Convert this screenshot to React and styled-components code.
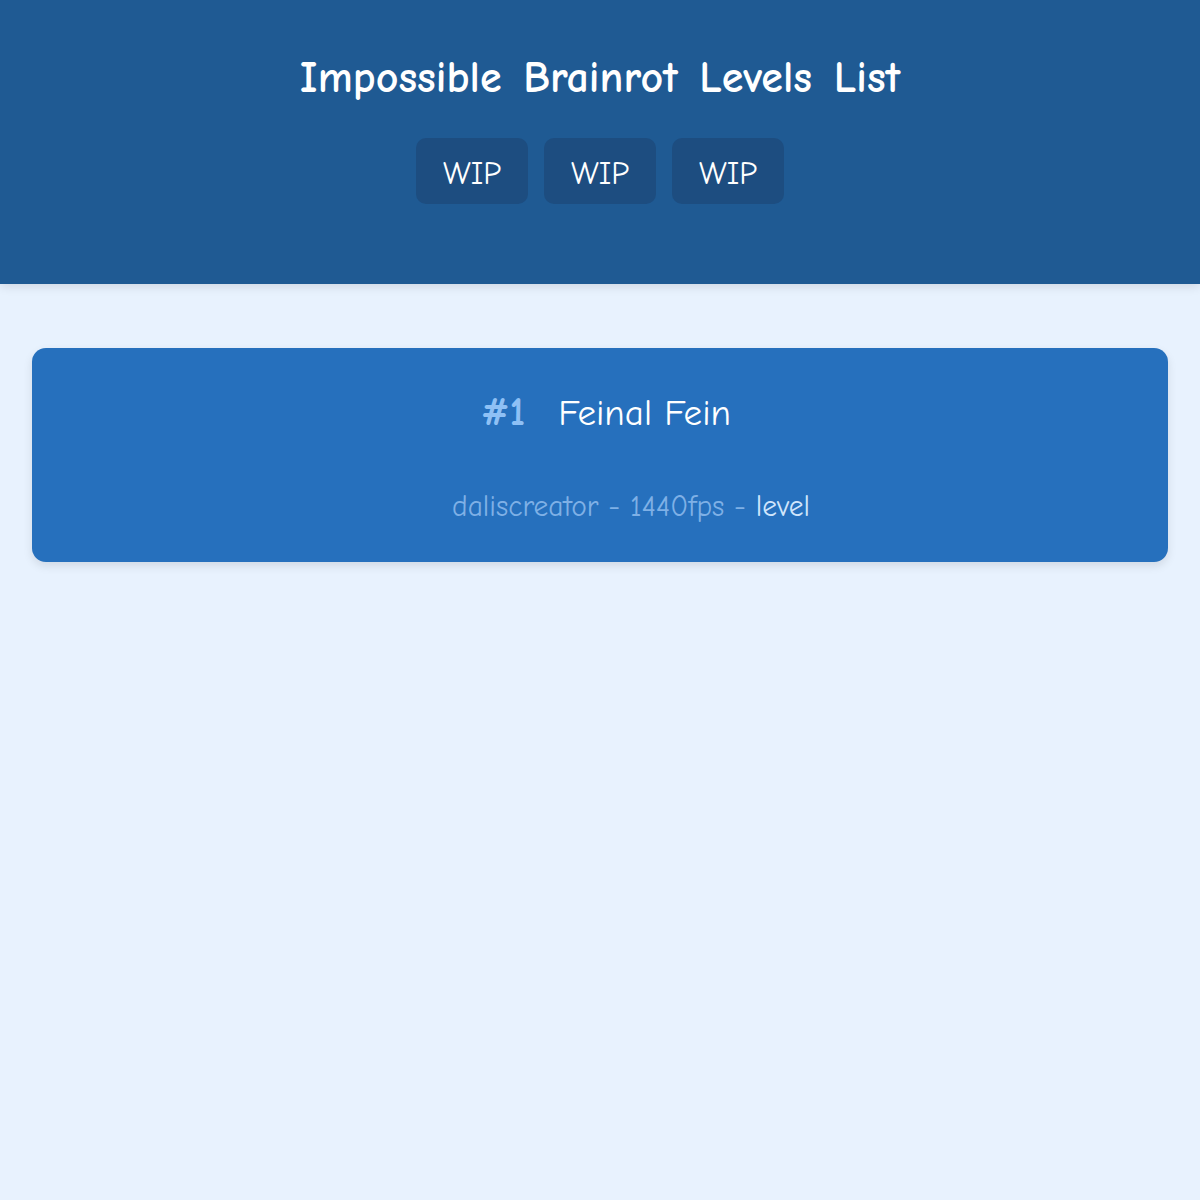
import styled, { createGlobalStyle } from "styled-components";

const GlobalStyle = createGlobalStyle`
  body {
    margin: 0;
    background: #e8f2fe;
    font-family: "Comic Sans MS", "Comic Neue", "Noto Sans", sans-serif;
  }
`;

const Header = styled.header`
  background: #1f5a93;
  height: 284px;
  box-sizing: border-box;
  padding-top: 50px;
  display: flex;
  flex-direction: column;
  align-items: center;
  box-shadow: 0 2px 10px rgba(0, 0, 0, 0.12);
`;

const Title = styled.h1`
  margin: 0;
  color: #ffffff;
  font-size: 44px;
  font-weight: 700;
  line-height: 56px;
  word-spacing: 6px;
`;

const Nav = styled.nav`
  display: flex;
  gap: 16px;
  margin-top: 32px;
`;

const NavButton = styled.button`
  width: 112px;
  height: 66px;
  border: none;
  border-radius: 10px;
  background: #1d4d80;
  color: #ffffff;
  font-family: inherit;
  font-size: 32px;
  padding: 4px 0 0;
  cursor: pointer;
`;

const Main = styled.main`
  padding: 64px 32px;
`;

const Card = styled.div`
  background: #2670bd;
  border-radius: 14px;
  height: 214px;
  box-sizing: border-box;
  padding-top: 38px;
  display: flex;
  flex-direction: column;
  align-items: center;
  box-shadow: 0 4px 10px rgba(0, 0, 0, 0.1);
`;

const LevelName = styled.h2`
  margin: 0 0 0 12px;
  font-size: 37px;
  font-weight: 400;
  line-height: 52px;
  color: #ffffff;
  display: flex;
  align-items: baseline;
  gap: 33px;
`;

const Rank = styled.span`
  color: #8ec0f5;
  font-size: 40px;
  font-weight: 700;
`;

const Meta = styled.p`
  margin: 48px 0 0;
  padding-left: 62px;
  font-size: 29.5px;
  line-height: 38px;
  color: #7fb0e6;
`;

const MetaLink = styled.a`
  color: #cfe5fc;
  text-decoration: none;
`;

const levels = [
  { rank: 1, name: "Feinal Fein", creator: "daliscreator", fps: "1440fps" },
];

export default function App() {
  return (
    <>
      <GlobalStyle />
      <Header>
        <Title>Impossible Brainrot Levels List</Title>
        <Nav>
          <NavButton>WIP</NavButton>
          <NavButton>WIP</NavButton>
          <NavButton>WIP</NavButton>
        </Nav>
      </Header>
      <Main>
        {levels.map((l) => (
          <Card key={l.rank}>
            <LevelName>
              <Rank>#{l.rank}</Rank>
              <span>{l.name}</span>
            </LevelName>
            <Meta>
              {l.creator} - {l.fps} - <MetaLink href="#">level</MetaLink>
            </Meta>
          </Card>
        ))}
      </Main>
    </>
  );
}
